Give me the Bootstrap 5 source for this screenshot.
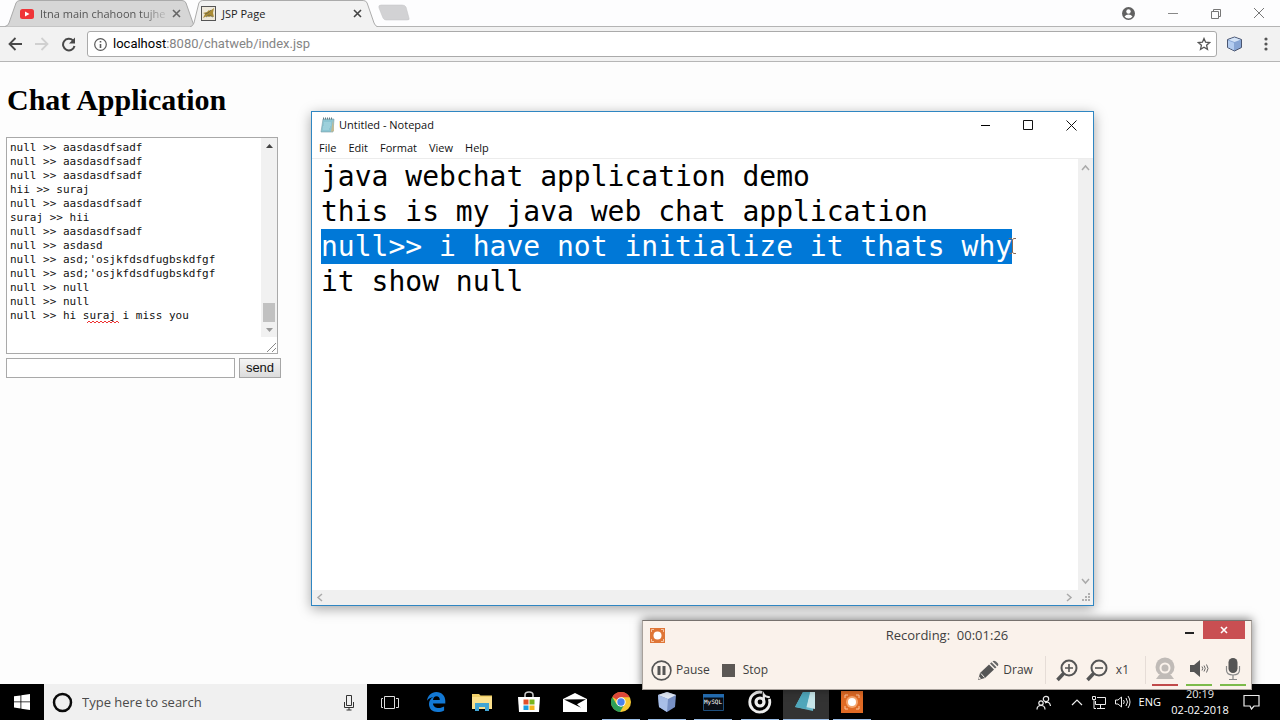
<!DOCTYPE html>
<html lang="en">
<head>
<meta charset="utf-8">
<meta name="viewport" content="width=device-width, initial-scale=1">
<title>JSP Page</title>
<link href="https://cdn.jsdelivr.net/npm/bootstrap@5.3.0/dist/css/bootstrap.min.css" rel="stylesheet">
<style>
  body { font-family: "Open Sans", "Noto Sans", sans-serif; font-size: 12px; line-height: 16px; color: #222; background: #fdfdfd; }
  button { border: 0; background: none; padding: 0; color: inherit; display: inline-flex; align-items: center; justify-content: center; flex-shrink: 0; }
  svg { display: block; flex-shrink: 0; }
  .desk { min-height: 100vh; }

  /* browser */
  .tabstrip { height: 27px; padding-left: 5px; background: #fdfdfe; border-bottom: 1px solid #b4b4b4; }
  .chrome-tab { height: 27px; font-size: 11px; }
  .chrome-tab > .shape { position: absolute; inset: 0; width: 100%; height: 100%; }
  .tab-back { width: 190px; color: #555; padding: 0 14px 0 15px; gap: 6px; }
  .tab-front { width: 188px; margin-left: -5px; padding: 0 16px 0 11px; gap: 6px; z-index: 1; }
  .fade-text { white-space: nowrap; -webkit-mask-image: linear-gradient(90deg, #000 80%, rgba(0,0,0,.2)); }
  .wincontrols { gap: 32px; padding-right: 15px; color: #777; }
  .toolbar { height: 35px; background: #f2f2f2; border-bottom: 1px solid #b6b6b6; padding: 0 4px 0 7px; gap: 9px; color: #4a4a4a; }
  .address { height: 26px; border: 1px solid #aaa; border-radius: 3px; background: #fff; padding: 0 5px 0 6px; gap: 6px; }
  .address-text { font: 13px/20px Roboto, sans-serif; color: #858585; }
  .page { padding: 22px 6px; }
  h1 { font: bold 30px/32px "Liberation Serif", serif; color: #000; margin: 0 0 21px 1px; }
  .log-frame { width: 272px; height: 217px; border: 1px solid #a9a9a9; background: #fff; }
  .log-frame textarea { border: 0; outline: 0; resize: none; overflow: hidden; padding: 3px 0 0 3px; font: 11px/14px "DejaVu Sans Mono", monospace; color: #111; background: transparent; }
  .squiggle { position: absolute; left: 80px; top: 182px; }
  .log-bar { width: 16px; }
  .log-track { background: #f1f1f1; padding: 6px 0 5px; }
  .log-thumb { width: 12px; height: 19px; background: #c1c1c1; margin-bottom: 6px; }
  .msg { width: 229px; height: 20px; border: 1px solid #a9a9a9; padding: 0 3px; outline: 0; }
  .send { width: 42px; height: 20px; border: 1px solid #a6a6a6; background: linear-gradient(#f5f5f5, #dcdcdc); font: 13px/16px "Liberation Sans", sans-serif; color: #111; }

  /* notepad */
  .notepad { position: absolute; left: 311px; top: 111px; width: 783px; height: 495px; background: #fff; border: 1px solid #2f86c2; box-shadow: 0 3px 12px rgba(0,0,0,.35); z-index: 5; }
  .np-title { height: 26px; padding: 0 16px 0 8px; font-size: 11px; color: #111; }
  .np-menu { height: 21px; padding-left: 7px; gap: 12px; font-size: 11px; border-bottom: 1px solid #ececec; color: #111; }
  .np-text { border: 0; outline: 0; resize: none; overflow: hidden; padding: 0 0 0 9px; font: 28px/35px "DejaVu Sans Mono", monospace; color: #000; caret-color: transparent; }
  .np-text::selection { background: #0078d7; color: #fff; }
  .np-side { width: 15px; background: #f0f0f0; padding: 4px 0; }
  .np-foot { height: 15px; background: #f0f0f0; padding: 0 3px 0 4px; }
  .ibeam { position: absolute; left: 697px; top: 125px; }

  /* recorder */
  .recorder { position: absolute; right: 28px; bottom: 30px; width: 610px; height: 70px; background: #faf2eb; border: 1px solid #a8a19b; border-top-color: #77726e; box-shadow: 0 -1px 9px rgba(0,0,0,.5); z-index: 20; color: #3f3f3f; }
  .rec-title { height: 28px; padding: 0 6px 0 7px; font-size: 13px; }
  .rec-close { width: 42px; height: 18px; background: #c94f52; color: #fff; }
  .rec-row { height: 40px; padding: 2px 5px 0 8px; }
  .rule { width: 1px; height: 28px; background: #e6ddd7; margin: 0 6px 0 12px; }
  .device { width: 26px; height: 32px; border-bottom: 2px solid #7cbb4b; }
  .device.off { border-color: #c04a4a; }

  /* taskbar */
  .taskbar { height: 36px; background: #000; color: #fff; }
  .start { width: 44px; height: 36px; }
  .search { width: 323px; height: 36px; background: #f0f0f0; padding: 0 12px 0 8px; gap: 9px; }
  .search input { border: 0; outline: 0; background: transparent; font-size: 13px; color: #333; padding: 0; min-width: 0; }
  .search input::placeholder { color: #4a4a4a; opacity: 1; }
  .pins { width: 508px; }
  .pins button { flex: 1 1 0; height: 36px; }
  .pins .run { background: linear-gradient(#9cbfe8, #9cbfe8) center bottom / 38px 1px no-repeat; }
  .pins .live { background-color: #333; background-size: 100% 1px; }
  .tray { gap: 8px; padding-right: 20px; font-size: 11px; }
  .clock { width: 62px; line-height: 16px; }
</style>
</head>
<body>
<div class="desk d-flex flex-column position-relative overflow-hidden">

  <header>
    <div class="tabstrip d-flex">
      <div class="chrome-tab tab-back position-relative d-flex align-items-center">
        <svg class="shape" viewBox="0 0 190 27" preserveAspectRatio="none"><path d="M0 26.500Q3 26 4 23L11 3Q12 .5 15 .5H177Q180 .5 181 3L188 23Q189 26 190 26.500" fill="#d6d6d6" stroke="#aaa"/></svg>
        <svg class="position-relative" width="14" height="12" viewBox="0 0 14 12"><rect y="1" width="14" height="10" rx="2.500" fill="#ef3438"/><path d="M5 3.500 9.500 6 5 8.500z" fill="#fff"/></svg>
        <span class="fade-text position-relative me-auto">Itna main chahoon tujhe</span>
        <button class="position-relative" aria-label="Close tab"><svg width="9" height="9" viewBox="0 0 9 9"><path d="m1 1 7 7M8 1 1 8" stroke="#666" stroke-width="1.600"/></svg></button>
      </div>
      <div class="chrome-tab tab-front position-relative d-flex align-items-center">
        <svg class="shape" viewBox="0 0 190 27" preserveAspectRatio="none"><path d="M0 27Q3 26 4 23L9 3Q10 .5 13 .5H175Q178 .5 179 3L186 23Q187 26 190 27" fill="#f2f2f2" stroke="#aaa"/></svg>
        <svg class="position-relative" width="15" height="15" viewBox="0 0 15 15"><rect x=".5" y=".5" width="14" height="14" fill="#eee9dc" stroke="#555"/><path d="m2 12 2-4-2-1 4-1 2-2 1 1 4-3-1 5 1 4-3-1-2 1-2-1z" fill="#a98b35"/><path d="m4 8 3-1 3-3M5 11l3-2 4 2" stroke="#6a6448" fill="none" stroke-width=".8"/></svg>
        <span class="position-relative me-auto">JSP Page</span>
        <button class="position-relative" aria-label="Close tab"><svg width="9" height="9" viewBox="0 0 9 9"><path d="m1 1 7 7M8 1 1 8" stroke="#444" stroke-width="1.600"/></svg></button>
      </div>
      <button aria-label="New tab" class="align-self-center"><svg width="32" height="18" viewBox="0 0 32 18"><path d="M3 1H24q3 0 4 2l3 11q1 2-2 2H8q-2 0-3-2L1 4Q0 1 3 1z" fill="#d2d2d4" stroke="#c2c2c4" stroke-width=".5"/></svg></button>
      <div class="wincontrols ms-auto d-flex align-items-center">
        <button aria-label="Profile"><svg width="13" height="13" viewBox="0 0 13 13"><circle cx="6.500" cy="6.500" r="6.500" fill="#616161"/><circle cx="6.500" cy="4.500" r="2.200" fill="#fff"/><path d="M2.500 9.500Q4 7.600 6.500 7.600t4 1.900Q9 11.600 6.500 11.600T2.500 9.500z" fill="#fff"/></svg></button>
        <button aria-label="Minimize"><svg width="11" height="11"><path d="M1 5.500h10" stroke="#888"/></svg></button>
        <button aria-label="Restore"><svg width="11" height="11" fill="none" stroke="#777"><path d="M1.500 3.500h7v7h-7zM3.500 3V1.500h7v7H9"/></svg></button>
        <button aria-label="Close"><svg width="12" height="12"><path d="m1 1 10 10M11 1 1 11" stroke="#777"/></svg></button>
      </div>
    </div>
    <nav class="toolbar d-flex align-items-center" aria-label="Browser">
      <button aria-label="Back"><svg width="17" height="16" viewBox="0 0 17 16" fill="none" stroke="#484848" stroke-width="1.800"><path d="M15 8H3M8.500 2 2.500 8l6 6"/></svg></button>
      <button aria-label="Forward"><svg width="17" height="16" viewBox="0 0 17 16" fill="none" stroke="#d0d0d0" stroke-width="1.800"><path d="M2 8h12M8.500 2l6 6-6 6"/></svg></button>
      <button aria-label="Reload"><svg width="19" height="16" viewBox="0 0 19 16"><path d="M14 4.500A5.800 5.800 0 1 0 15.500 10" fill="none" stroke="#484848" stroke-width="2"/><path d="M16 1.500v6H10z" fill="#484848"/></svg></button>
      <div class="address d-flex align-items-center flex-grow-1">
        <svg width="13" height="13" viewBox="0 0 13 13"><circle cx="6.500" cy="6.500" r="5.800" fill="none" stroke="#5a5a5a" stroke-width="1.200"/><path d="M6.500 6v4M6.500 3v1.600" stroke="#5a5a5a" stroke-width="1.600"/></svg>
        <div class="address-text flex-grow-1"><span class="text-black">localhost</span>:8080/chatweb/index.jsp</div>
        <button aria-label="Bookmark"><svg width="14" height="14" viewBox="0 0 14 14"><path d="m7 1.500 1.600 3.700 4 .4-3 2.700.9 4L7 10.200l-3.500 2.100.9-4-3-2.700 4-.4z" fill="none" stroke="#555" stroke-width="1.300"/></svg></button>
      </div>
      <button aria-label="Extension"><svg width="17" height="16" viewBox="0 0 17 16"><path d="m8.500 1 7 2.500v8L8.500 15l-7-3.500v-8z" fill="#87a5d4" stroke="#4a5570"/><path d="m8.500 1.500 6 2.200-6 2.300-6-2.300z" fill="#d5e4f7"/><path d="m2 4.500 6 2.300v7.400l-6-3z" fill="#b4cdf0"/></svg></button>
      <button class="px-2 ms-1" aria-label="Menu"><svg width="4" height="14"><g fill="#555"><circle cx="2" cy="2" r="1.600"/><circle cx="2" cy="7" r="1.600"/><circle cx="2" cy="12" r="1.600"/></g></svg></button>
    </nav>
  </header>

  <main class="page flex-grow-1">
    <h1>Chat Application</h1>
    <div class="log-frame position-relative d-flex mb-1">
      <textarea class="flex-grow-1" aria-label="Chat log" spellcheck="false" wrap="off">null &gt;&gt; aasdasdfsadf
null &gt;&gt; aasdasdfsadf
null &gt;&gt; aasdasdfsadf
hii &gt;&gt; suraj
null &gt;&gt; aasdasdfsadf
suraj &gt;&gt; hii
null &gt;&gt; aasdasdfsadf
null &gt;&gt; asdasd
null &gt;&gt; asd;'osjkfdsdfugbskdfgf
null &gt;&gt; asd;'osjkfdsdfugbskdfgf
null &gt;&gt; null
null &gt;&gt; null
null &gt;&gt; hi suraj i miss you</textarea>
      <svg class="squiggle" width="34" height="4"><path d="m0 3 2-2 2 2 2-2 2 2 2-2 2 2 2-2 2 2 2-2 2 2 2-2 2 2 2-2 2 2 2-2 2 2" fill="none" stroke="#e33"/></svg>
      <div class="log-bar d-flex flex-column">
        <div class="log-track d-flex flex-column align-items-center flex-grow-1">
          <svg width="7" height="4" class="mb-auto"><path d="M0 4 3.500 0 7 4z" fill="#444"/></svg>
          <div class="log-thumb"></div>
          <svg width="7" height="4"><path d="M0 0 3.500 4 7 0z" fill="#999"/></svg>
        </div>
        <svg width="16" height="16"><path d="m6 15 9-9M11 15l4-4" stroke="#888"/></svg>
      </div>
    </div>
    <form class="d-flex gap-1" onsubmit="return false">
      <input class="msg" type="text" aria-label="Message">
      <button class="send" type="submit">send</button>
    </form>
  </main>

  <section class="notepad d-flex flex-column" aria-label="Notepad">
    <div class="np-title d-flex align-items-center">
      <svg width="15" height="16" viewBox="0 0 15 16"><path d="M3 2h11l-1 13H1z" fill="#8cc5d2" stroke="#7aa0aa" stroke-width=".6"/><path d="m13 3 1 11-3 1z" fill="#c5b98e"/><path d="M3 1.500h10" stroke="#667d84" stroke-dasharray="1 1" stroke-width="2"/><path d="M4 6h7M4 8h7M3 10h7M3 12h6" stroke="#b7e2ea" stroke-width=".8"/></svg>
      <span class="ms-1">Untitled - Notepad</span>
      <button class="ms-auto" aria-label="Minimize"><svg width="11" height="11"><path d="M1 5.500h9" stroke="#000"/></svg></button>
      <button class="mx-4 px-2" aria-label="Maximize"><svg width="11" height="11"><path d="M.5.500h9v9h-9z" fill="none" stroke="#111"/></svg></button>
      <button aria-label="Close"><svg width="11" height="11"><path d="m.5.5 10 10m0-10-10 10" stroke="#111"/></svg></button>
    </div>
    <div class="np-menu d-flex align-items-center"><button>File</button><button>Edit</button><button>Format</button><button>View</button><button>Help</button></div>
    <div class="d-flex flex-grow-1">
      <textarea id="note" class="np-text flex-grow-1" aria-label="Document" spellcheck="false" wrap="off">java webchat application demo
this is my java web chat application
null&gt;&gt; i have not initialize it thats why
it show null</textarea>
      <div class="np-side d-flex flex-column align-items-center justify-content-between">
        <svg width="9" height="9" fill="none" stroke="#aaa" stroke-width="1.500"><path d="m1 7 3.500-4L8 7"/></svg>
        <svg width="9" height="9" fill="none" stroke="#aaa" stroke-width="1.500"><path d="m1 2 3.500 4L8 2"/></svg>
      </div>
    </div>
    <div class="np-foot d-flex align-items-center">
      <svg width="7" height="9" fill="none" stroke="#aaa" stroke-width="1.500"><path d="M6 1 2 4.500 6 8"/></svg>
      <svg class="ms-auto me-2" width="7" height="9" fill="none" stroke="#aaa" stroke-width="1.500"><path d="m1 1 4 3.500L1 8"/></svg>
      <svg width="9" height="9" fill="#b0b0b0"><path d="M7 0h2v2H7zM4 3h2v2H4zM7 3h2v2H7zM1 6h2v2H1zM4 6h2v2H4zM7 6h2v2H7z"/></svg>
    </div>
    <svg class="ibeam" width="7" height="18" fill="none" stroke="#8a6a55"><path d="M0 1.500h2.500L3.500 3l1-1.500H7M3.500 3v12M0 16.500h2.500l1-1.500 1 1.500H7"/></svg>
  </section>

  <section class="recorder" aria-label="Recorder">
    <div class="rec-title d-flex position-relative">
      <svg class="align-self-center" width="15" height="15" viewBox="0 0 15 15"><path d="M0 0h15v15H0z" fill="#df7637"/><circle cx="7.500" cy="7.500" r="4" fill="#fff"/><path d="M1.500 4V1.500H4M11 1.500h2.500V4M13.500 11v2.500H11M4 13.500H1.500V11" fill="none" stroke="#fbd9c0" stroke-width=".8"/></svg>
      <div class="position-absolute start-50 top-50 translate-middle text-nowrap">Recording:&nbsp; 00:01:26</div>
      <button class="ms-auto me-2 align-self-center" aria-label="Minimize"><svg width="10" height="8"><path d="M0 1h9v2H0z" fill="#222"/></svg></button>
      <button class="rec-close" aria-label="Close"><svg width="8" height="8"><path d="m1 1 6 6m0-6L1 7" stroke="#fff" stroke-width="1.600"/></svg></button>
    </div>
    <div class="rec-row d-flex align-items-center">
      <button class="gap-1"><svg width="21" height="21" viewBox="0 0 21 21"><circle cx="10.500" cy="10.500" r="9.400" fill="none" stroke="#555" stroke-width="1.600"/><path d="M6.500 6h3v9h-3zM11.500 6h3v9h-3z" fill="#555"/></svg>Pause</button>
      <button class="gap-2 ms-2 ps-1"><svg width="13" height="13"><path d="M0 0h13v13H0z" fill="#5c5855"/></svg>Stop</button>
      <button class="ms-auto gap-1"><svg width="22" height="21" viewBox="0 0 22 21"><path d="m3 13 9-8.500 5 5L8 18l-7 2z" fill="#555"/><path d="m13 3.500 1.500-1.300 5 5L18 8.500zM15.500 1.300Q17 0 19 1.500l2 2Q22 5 20.500 6.300z" fill="#666"/><path d="m4 13.500 3.500 4" stroke="#faf2eb"/><path d="m2 16.500 2 2-2.500.8z" fill="#faf2eb"/></svg>Draw</button>
      <span class="rule"></span>
      <button class="ms-1" aria-label="Zoom in"><svg width="22" height="23" viewBox="0 0 22 23"><circle cx="13" cy="9" r="7.500" fill="none" stroke="#555" stroke-width="2"/><path d="m8 14-6.500 7" stroke="#555" stroke-width="3.500"/><path d="M9 9h8M13 5v8" stroke="#555" stroke-width="1.600"/></svg></button>
      <button class="mx-2" aria-label="Zoom out"><svg width="22" height="23" viewBox="0 0 22 23"><circle cx="13" cy="9" r="7.500" fill="none" stroke="#555" stroke-width="2"/><path d="m8 14-6.500 7" stroke="#555" stroke-width="3.500"/><path d="M9 9h8" stroke="#555" stroke-width="1.600"/></svg></button>
      <span>x1</span>
      <span class="rule ms-3"></span>
      <div class="d-flex gap-2">
        <button class="device off" aria-label="Webcam"><svg width="20" height="24" viewBox="0 0 20 24"><circle cx="10" cy="10" r="9.500" fill="#c0bbb7"/><circle cx="10" cy="11" r="4.500" fill="none" stroke="#faf2eb" stroke-width="2"/><path d="M4 18h12l3 4H1z" fill="#c0bbb7"/></svg></button>
        <button class="device" aria-label="Sound"><svg width="20" height="20" viewBox="0 0 20 20"><path d="M1 6h4l6-5v17l-6-5H1z" fill="#555"/><path d="M13 7.500q1.500 2 0 4M15 6.500q2.500 3 0 6M17.500 5.500q3 4 0 8" fill="none" stroke="#666"/></svg></button>
        <button class="device" aria-label="Microphone"><svg width="16" height="24" viewBox="0 0 16 24"><rect x="3.500" y="1" width="9" height="15" rx="4.500" fill="#555"/><path d="M1.500 9v4q0 5 6.500 5t6.500-5V9M8 18v4M4 22.500h8" fill="none" stroke="#888" stroke-width="1.200"/></svg></button>
      </div>
    </div>
  </section>

  <footer class="taskbar d-flex align-items-center">
    <button class="start" aria-label="Start"><svg width="16" height="16" viewBox="0 0 16 16" fill="#fff"><path d="m0 2.300 6.500-.9v6.100H0zM7.300 1.300 16 0v7.500H7.300zM0 8.300h6.500v6.200L0 13.600zM7.300 8.300H16V16l-8.700-1.300z"/></svg></button>
    <div class="search d-flex align-items-center">
      <svg width="21" height="21"><circle cx="10.500" cy="10.500" r="8.500" fill="none" stroke="#0a0a0a" stroke-width="2.500"/></svg>
      <input class="flex-grow-1" type="search" placeholder="Type here to search" aria-label="Search">
      <button aria-label="Dictate"><svg width="12" height="17" viewBox="0 0 12 17" fill="none" stroke="#333"><path d="M3.500 1.500h5v10h-5zM1.500 8v5.500h9V8M6 13.500V16M3.500 16h5"/></svg></button>
    </div>
    <div class="pins d-flex">
      <button aria-label="Task view"><svg width="20" height="15" viewBox="0 0 20 15" fill="none" stroke="#ddd"><path d="M4.500 1.500h10v12h-10zM3 3.500H1.500v9H3M16 3.500h2.500v9H16"/></svg></button>
      <button aria-label="Edge"><svg width="20" height="20" viewBox="0 0 20 20"><path d="M1 8.800C1.500 3.500 5.500 0 10.300 0 16 0 19.300 4 19.300 9v2.500H7c.2 3.300 3 4.500 5.600 4.500 2 0 4-.6 5.500-1.500v4C16.300 19.500 14 20 11.500 20 6.500 20 3 17 3 12c0-3 1.600-5.600 4.300-7C4.800 5.300 2.500 6.600 1 8.800zM7 8h6.800c0-2.400-1.200-3.800-3.300-3.800S7.300 5.700 7 8z" fill="#1278d4"/></svg></button>
      <button aria-label="File Explorer"><svg width="20" height="18" viewBox="0 0 20 18"><path d="M0 1h7l1.500 1.500H20V16H0z" fill="#f0cf68"/><path d="M0 4h20v12H0z" fill="#fbe08c"/><path d="M3 10h14v8h-4v-4H7v4H3z" fill="#42a5d3"/></svg></button>
      <button aria-label="Store"><svg width="22" height="22" viewBox="0 0 22 22"><path d="M7 6V4q0-3 4-3t4 3v2" fill="none" stroke="#ccc" stroke-width="1.500"/><path d="M0 6h22l-1 15H1z" fill="#fff"/><path d="M5.500 8.500h5v5h-5z" fill="#e2502b"/><path d="M11.500 8.500h5v5h-5z" fill="#79b51c"/><path d="M5.500 14.500h5v4.500h-5z" fill="#1b9de2"/><path d="M11.500 14.500h5v4.500h-5z" fill="#f4b51a"/></svg></button>
      <button aria-label="Mail"><svg width="24" height="19" viewBox="0 0 24 19"><path d="M0 6 12 0l12 6v13H0z" fill="#fff"/><path d="m1 6.500 22-.2-9 5 4 3.500z" fill="#000"/></svg></button>
      <button class="run" aria-label="Chrome"><svg width="20" height="20" viewBox="0 0 20 20"><circle cx="10" cy="10" r="10" fill="#f6c832"/><path d="M10 10 1.300 5A10 10 0 0 1 18.700 5.200H10z" fill="#dc483a"/><path d="M1.300 5A10 10 0 0 0 9 20l4.300-7.500L10 10 5.700 12.500z" fill="#2d9f58"/><circle cx="10" cy="10" r="4.700" fill="#fff"/><circle cx="10" cy="10" r="3.700" fill="#4a83ec"/></svg></button>
      <button class="run" aria-label="NetBeans"><svg width="20" height="20" viewBox="0 0 20 20"><path d="m10 0 9 3-1 12-8 5-8-5L1 3z" fill="#7790c4"/><path d="m10 0 9 3-8 4L1 3z" fill="#e3ebf8"/><path d="m1 3 10 4-1 13-8-5z" fill="#a9bfe8"/></svg></button>
      <button class="run" aria-label="MySQL"><svg width="21" height="17" viewBox="0 0 21 17"><path d="M.5.500h20v16H.5z" fill="#080d14" stroke="#1d4e7c"/><path d="M0 0h21v3.500H0z" fill="#256fb5"/><text x="1" y="10" font-size="6" fill="#fff" font-family="DejaVu Sans Mono">MySQL</text></svg></button>
      <button class="run" aria-label="Groove Music"><svg width="24" height="24" viewBox="0 0 24 24" fill="none" stroke="#eee"><path d="M14 2.300A10 10 0 1 0 21.300 9" stroke-width="2.800"/><circle cx="12" cy="12" r="4" stroke-width="3.200"/><path d="M15.800 11V4.500q2 3 6 2.500" stroke-width="2.200"/></svg></button>
      <button class="run live" aria-label="Notepad"><svg width="24" height="20" viewBox="0 0 24 20"><path d="m9 0 12-1-2 20L1 15z" fill="#66b6c9"/><path d="m16 0 5-1v18l-9-2z" fill="#c6e5e9"/><path d="m9 0 7 .2L12 17 1 15z" fill="#4fa6ba"/></svg></button>
      <button class="run" aria-label="Recorder"><svg width="22" height="22" viewBox="0 0 22 22"><path d="M0 0h22v22H0z" fill="#e06a24"/><circle cx="11" cy="11" r="6" fill="#f4a46c"/><circle cx="11" cy="11" r="4" fill="#fff"/><path d="M4 7V4h3M15 4h3v3M18 15v3h-3M7 18H4v-3" fill="none" stroke="#ffc49c"/></svg></button>
    </div>
    <div class="tray ms-auto d-flex align-items-center">
      <button class="me-2" aria-label="People"><svg width="15" height="15" viewBox="0 0 15 15" fill="none" stroke="#eee" stroke-width="1.200"><circle cx="10" cy="4" r="2.700"/><circle cx="5" cy="8" r="2.200"/><path d="M1 14.500q0-4 4-4t4 4M9 8q4.500-2.500 5.500 3"/></svg></button>
      <button class="ms-1" aria-label="Show hidden icons"><svg width="12" height="8" fill="none" stroke="#eee" stroke-width="1.200"><path d="m1 7 5-5 5 5"/></svg></button>
      <button aria-label="Network"><svg width="16" height="14" viewBox="0 0 16 14" fill="none" stroke="#eee"><path d="M6 2.500h8.500v7h-10V6M9.500 10v3M6 13.500h8M1.500 1.500h3v3h-3zM3 5v8.500h2"/></svg></button>
      <button aria-label="Volume"><svg width="16" height="14" viewBox="0 0 16 14" fill="none" stroke="#eee"><path d="M.5 5h2.500L6.500 2v10L3 9H.5zM8.500 5q1.500 2 0 4M11 3q3 4 0 8M13 1q4 6 0 12"/></svg></button>
      <button aria-label="Language">ENG</button>
      <div class="clock text-center">20:19<br>02-02-2018</div>
      <button class="ms-1" aria-label="Notifications"><svg width="17" height="16" viewBox="0 0 17 16" fill="none" stroke="#eee" stroke-width="1.200"><path d="M1 1.500h15v10.500H11L8.500 15 7 12H1z"/></svg></button>
    </div>
  </footer>
</div>
<script src="https://cdn.jsdelivr.net/npm/bootstrap@5.3.0/dist/js/bootstrap.bundle.min.js"></script>
<script>
  // Open the note with its third line selected.
  const note = document.getElementById('note');
  const start = note.value.indexOf('null>>');
  note.focus();
  note.setSelectionRange(start, note.value.indexOf('\n', start));
</script>
</body>
</html>
